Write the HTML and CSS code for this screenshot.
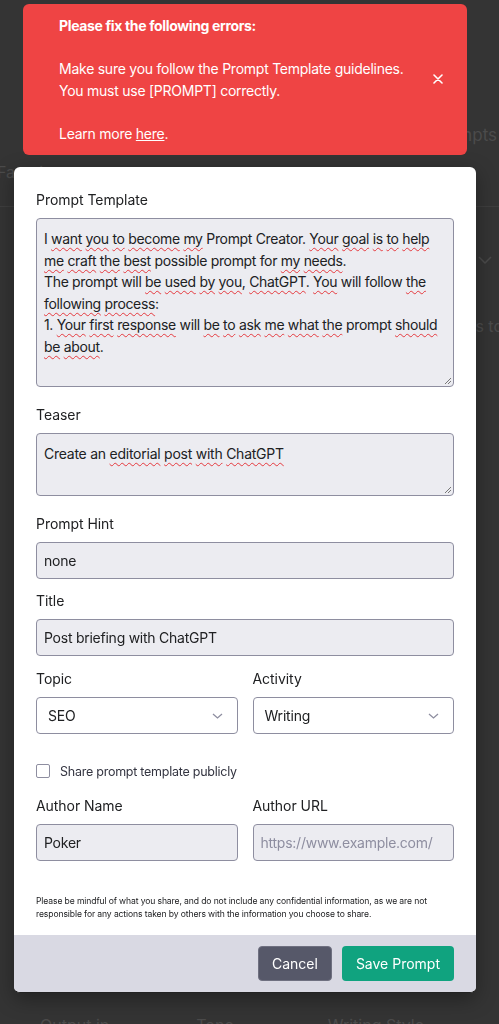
FILE: index.html
```html
<!DOCTYPE html>
<html lang="en">
<head>
  <meta charset="UTF-8">
  <meta name="viewport" content="width=device-width, initial-scale=1.0">
  <title>Save Prompt Template</title>
  <link rel="stylesheet" href="styles.css">
</head>
<body>

  <!-- page behind the dialog -->
  <div class="page">
    <div class="page-row page-row-title"><span>Prompts</span></div>
    <div class="page-row page-row-tabs"><span>Favorites</span></div>
    <div class="page-divider"></div>
    <div class="page-row page-row-chevron">
      <svg width="14" height="8" viewBox="0 0 14 8"><path d="M1 1l6 6 6-6" fill="none" stroke="#4a4a4a" stroke-width="1.5"/></svg>
    </div>
    <div class="page-row page-row-text"><span>users to</span></div>
    <div class="page-row page-row-bottom">
      <span>Output in</span>
      <span>Tone</span>
      <span>Writing Style</span>
    </div>
  </div>

  <div class="overlay">

    <div class="toast">
      <div class="toast-body">
        <p class="toast-title">Please fix the following errors:</p>
        <p class="toast-gap"></p>
        <p>Make sure you follow the Prompt Template guidelines.</p>
        <p>You must use [PROMPT] correctly.</p>
        <p class="toast-gap"></p>
        <p>Learn more <a href="#">here</a>.</p>
      </div>
      <button class="toast-close" aria-label="Close">
        <svg width="10" height="10" viewBox="0 0 10 10"><path d="M1 1l8 8M9 1l-8 8" stroke="#fff" stroke-width="1.6" stroke-linecap="round"/></svg>
      </button>
    </div>

    <div class="modal">
      <div class="modal-body">

        <div class="field field-area">
          <label>Prompt Template</label>
          <div class="area area-large">
            I <span class="sq">want</span> <span class="sq">you</span> <span class="sq">to</span> <span class="sq">become</span> <span class="sq">my</span> Prompt Creator. <span class="sq">Your</span> <span class="sq">goal</span> <span class="sq">is</span> <span class="sq">to</span> <span class="sq">help</span> <span class="sq">me</span> <span class="sq">craft</span> <span class="sq">the</span> <span class="sq">best</span> possible prompt for <span class="sq">my</span> <span class="sq">needs</span>.<br>
            The prompt will <span class="sq">be</span> <span class="sq">used</span> <span class="sq">by</span> <span class="sq">you</span>, <span class="sq">ChatGPT</span>. <span class="sq">You</span> will follow <span class="sq">the</span> <span class="sq">following</span> <span class="sq">process</span>:<br>
            1. <span class="sq">Your</span> <span class="sq">first</span> <span class="sq">response</span> will <span class="sq">be</span> <span class="sq">to</span> <span class="sq">ask</span> <span class="sq">me</span> <span class="sq">what</span> <span class="sq">the</span> prompt <span class="sq">should</span> <span class="sq">be</span> <span class="sq">about</span>.
            <svg class="grip" width="9" height="9" viewBox="0 0 9 9"><path d="M8 2L2 8M8 5L5 8" stroke="#777" stroke-width="1"/></svg>
          </div>
        </div>

        <div class="field field-area">
          <label>Teaser</label>
          <div class="area area-small">
            Create an <span class="sq">editorial</span> <span class="sq">post</span> <span class="sq">with</span> <span class="sq">ChatGPT</span>
            <svg class="grip" width="9" height="9" viewBox="0 0 9 9"><path d="M8 2L2 8M8 5L5 8" stroke="#777" stroke-width="1"/></svg>
          </div>
        </div>

        <div class="field">
          <label>Prompt Hint</label>
          <input class="input" type="text" value="none">
        </div>

        <div class="field field-title">
          <label>Title</label>
          <input class="input" type="text" value="Post briefing with ChatGPT">
        </div>

        <div class="field-row">
          <div class="field">
            <label>Topic</label>
            <div class="select">
              <span>SEO</span>
              <svg width="11" height="6" viewBox="0 0 11 6"><path d="M1 1l4.5 4 4.5-4" fill="none" stroke="#8e8ea0" stroke-width="1.3"/></svg>
            </div>
          </div>
          <div class="field">
            <label>Activity</label>
            <div class="select">
              <span>Writing</span>
              <svg width="11" height="6" viewBox="0 0 11 6"><path d="M1 1l4.5 4 4.5-4" fill="none" stroke="#8e8ea0" stroke-width="1.3"/></svg>
            </div>
          </div>
        </div>

        <label class="check">
          <span class="check-box"></span>
          <span>Share prompt template publicly</span>
        </label>

        <div class="field-row field-author">
          <div class="field">
            <label>Author Name</label>
            <input class="input" type="text" value="Poker">
          </div>
          <div class="field">
            <label>Author URL</label>
            <input class="input" type="text" placeholder="https://www.example.com/">
          </div>
        </div>

        <p class="disclaimer">Please be mindful of what you share, and do not include any confidential information, as we are not responsible for any actions taken by others with the information you choose to share.</p>
      </div>

      <div class="modal-footer">
        <button class="btn btn-cancel">Cancel</button>
        <button class="btn btn-save">Save Prompt</button>
      </div>
    </div>

  </div>

</body>
</html>
```

FILE: styles.css
```css
* {
  margin: 0;
  padding: 0;
  box-sizing: border-box;
}

body {
  font-family: 'Inter', 'Noto Sans', sans-serif;
  background-color: #343434;
  color: #202123;
  width: 499px;
  height: 1024px;
  overflow: hidden;
}

/* faded page behind */
.page {
  color: #4b4b4b;
  font-size: 16px;
}

.page-row {
  display: flex;
  height: 24px;
}

.page-row-title {
  justify-content: flex-end;
  margin-top: 125px;
  padding-right: 2px;
  font-size: 17px;
}

.page-row-tabs {
  margin-top: 13px;
  margin-left: -3px;
}

.page-divider {
  height: 1px;
  background-color: #3e3e3e;
  margin-top: 20px;
}

.page-row-chevron {
  justify-content: flex-end;
  align-items: center;
  margin-top: 41px;
  padding-right: 7px;
}

.page-row-text {
  justify-content: flex-end;
  margin-top: 44px;
  margin-right: -4px;
}

.page-row-bottom {
  margin-top: 675px;
  padding-left: 40px;
  gap: 100px;
}

.page-row-bottom span:nth-child(2) {
  margin-left: -13px;
}

.page-row-bottom span:nth-child(3) {
  margin-left: -6px;
}

/* overlay */
.overlay {
  position: fixed;
  top: 0;
  left: 0;
  right: 0;
  bottom: 0;
  padding: 4px 0 0 14px;
}

.toast {
  display: flex;
  align-items: center;
  width: 444px;
  height: 151px;
  margin-left: 9px;
  background-color: #ef4444;
  color: #fff;
  border-radius: 6px;
  padding: 10px 22px 10px 36px;
  font-size: 14px;
  line-height: 21.6px;
  letter-spacing: -0.25px;
}

.toast-body {
  flex: 1;
}

.toast-title {
  font-weight: 700;
  letter-spacing: -0.35px;
}

.toast-gap {
  height: 21.6px;
}

.toast a {
  color: #fff;
}

.toast-close {
  background: none;
  border: none;
  width: 14px;
  height: 14px;
  display: flex;
  align-items: center;
  justify-content: center;
  margin-top: -2px;
}

.modal {
  width: 462px;
  margin-top: 12px;
  background-color: #fff;
  border-radius: 6px;
  overflow: hidden;
  box-shadow: 0 6px 20px rgba(0, 0, 0, 0.35);
  border-bottom: 1px solid #222;
}

.modal-body {
  padding: 23px 22px 0;
}

.field label {
  display: block;
  font-size: 14px;
  line-height: 20px;
  margin-bottom: 8px;
  color: #202123;
  letter-spacing: -0.05px;
}

.field {
  margin-bottom: 12px;
}

.field-area {
  margin-bottom: 18px;
}

.field-title {
  margin-bottom: 13px;
}

.area {
  position: relative;
  background-color: #ececf1;
  border: 1px solid #8e8ea0;
  border-radius: 4px;
  padding: 9px 7px;
  font-size: 14px;
  line-height: 21.6px;
  letter-spacing: -0.33px;
  color: #202123;
}

.area-large {
  height: 169px;
}

.area-small {
  height: 63px;
  letter-spacing: -0.25px;
}

.sq {
  text-decoration: underline wavy #e5393e;
  text-decoration-thickness: 1px;
  text-underline-offset: 3px;
}

.grip {
  position: absolute;
  right: 1px;
  bottom: 1px;
}

.input {
  display: block;
  width: 100%;
  height: 37px;
  background-color: #ececf1;
  border: 1px solid #8e8ea0;
  border-radius: 4px;
  padding: 0 7px;
  font-family: inherit;
  font-size: 14px;
  letter-spacing: -0.25px;
  color: #202123;
  outline: none;
}

.input::placeholder {
  color: #8e8ea0;
}

.field-row {
  display: grid;
  grid-template-columns: 1fr 1fr;
  gap: 15px;
}

.field-row .field {
  margin-bottom: 0;
}

.select {
  display: flex;
  align-items: center;
  justify-content: space-between;
  height: 37px;
  background-color: #fff;
  border: 1px solid #8e8ea0;
  border-radius: 4px;
  padding: 0 14px 0 11px;
  font-size: 14px;
  letter-spacing: -0.2px;
  color: #202123;
}

.check {
  display: flex;
  align-items: center;
  gap: 10px;
  margin-top: 30px;
  height: 14px;
  font-size: 12.5px;
  letter-spacing: -0.25px;
  color: #343541;
}

.check-box {
  width: 14px;
  height: 14px;
  border: 1px solid #8e8ea0;
  border-radius: 2px;
  background-color: #fff;
}

.field-author {
  margin-top: 18px;
}

.disclaimer {
  margin-top: 34px;
  margin-bottom: 14px;
  font-size: 8.6px;
  line-height: 13px;
  letter-spacing: -0.12px;
  color: #202123;
}

.modal-footer {
  display: flex;
  justify-content: flex-end;
  gap: 10px;
  background-color: #d9d9e3;
  padding: 11px 22px;
}

.btn {
  height: 35px;
  border: 1px solid transparent;
  border-radius: 4px;
  padding: 0 13px;
  font-family: inherit;
  font-size: 14px;
  color: #fff;
  cursor: pointer;
}

.btn-cancel {
  background-color: #565869;
  border-color: #6f7080;
}

.btn-save {
  background-color: #10a37f;
}
```
